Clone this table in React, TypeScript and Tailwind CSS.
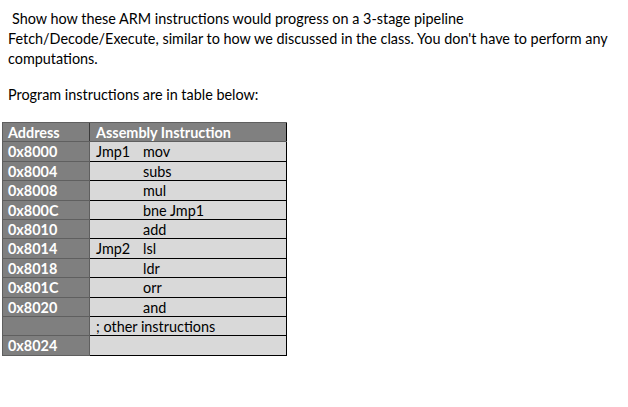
const rows: { addr: string; label?: string; instr: string; full?: boolean }[] = [
  { addr: '0x8000', label: 'Jmp1', instr: 'mov' },
  { addr: '0x8004', instr: 'subs' },
  { addr: '0x8008', instr: 'mul' },
  { addr: '0x800C', instr: 'bne Jmp1' },
  { addr: '0x8010', instr: 'add' },
  { addr: '0x8014', label: 'Jmp2', instr: 'lsl' },
  { addr: '0x8018', instr: 'ldr' },
  { addr: '0x801C', instr: 'orr' },
  { addr: '0x8020', instr: 'and' },
  { addr: '', instr: '; other instructions', full: true },
  { addr: '0x8024', instr: '' },
]

export default function App() {
  return (
    <div className="min-h-[407px] w-[628px] bg-white text-black font-['Lato','Open_Sans',sans-serif] text-[14.4px]">
      {/* Question text */}
      <div className="pl-[8px] pt-[9px] leading-[20px]">
        <p className="pl-[4px]">Show how these ARM instructions would progress on a 3-stage pipeline</p>
        <p>Fetch/Decode/Execute, similar to how we discussed in the class. You don't have to perform any</p>
        <p>computations.</p>
        <p className="mt-[16px]">Program instructions are in table below:</p>
      </div>

      {/* Instruction table */}
      <div className="ml-[2px] mt-[17px] w-[285px] border-t border-l border-[#5f5f5f] leading-[19px]">
        <div className="flex h-[19.4px] border-b border-[#5f5f5f]">
          <div className="w-[87px] shrink-0 border-r border-[#3a3a3a] bg-[#7f7f7f] pl-[5px] font-bold text-white">Address</div>
          <div className="flex-1 border-r border-black bg-[#808080] pl-[6px] font-bold text-white">Assembly Instruction</div>
        </div>
        {rows.map((r, i) => (
          <div key={i} className="flex h-[19.4px]">
            <div className="w-[87px] shrink-0 border-b border-r border-[#5f5f5f] bg-[#7f7f7f] pl-[5px] font-bold text-white">
              {r.addr}
            </div>
            <div className="flex flex-1 border-b border-r border-black bg-[#d9d9d9] pl-[6px]">
              {r.full ? (
                <span>{r.instr}</span>
              ) : (
                <>
                  <span className="w-[47px] shrink-0">{r.label ?? ''}</span>
                  <span>{r.instr}</span>
                </>
              )}
            </div>
          </div>
        ))}
      </div>
    </div>
  )
}
